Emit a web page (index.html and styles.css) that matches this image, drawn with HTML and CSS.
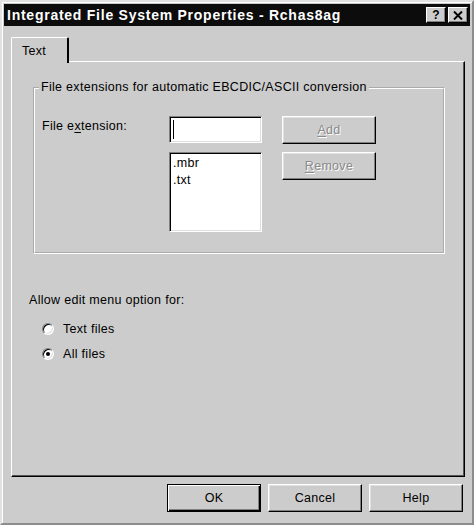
FILE: index.html
```html
<!DOCTYPE html>
<html lang="en">
  <head>
    <meta charset="UTF-8" />
    <meta name="viewport" content="width=device-width, initial-scale=1.0" />
    <title>Integrated File System Properties</title>
    <link rel="stylesheet" href="styles.css">
  </head>
  <body>
    <div class="window">
      <div class="titleBar">
        <span class="title">Integrated File System Properties - Rchas8ag</span>
        <div class="captionBtns">
          <button class="capBtn help">?</button>
          <button class="capBtn">
            <svg width="10" height="9" viewBox="0 0 10 9">
              <path d="M1 0.5 L9 8.5 M9 0.5 L1 8.5" stroke="#000" stroke-width="2" />
            </svg>
          </button>
        </div>
      </div>

      <div class="tabRow">
        <div class="tab">Text</div>
      </div>

      <div class="panel">
        <fieldset class="group">
          <legend>File extensions for automatic EBCDIC/ASCII conversion</legend>
          <div class="extGrid">
            <label class="extLabel">File e<u>x</u>tension:</label>
            <div class="input"><span class="caret"></span></div>
            <button class="btn" disabled><u>A</u>dd</button>
            <div class="listBox">
              <div>.mbr</div>
              <div>.txt</div>
            </div>
            <button class="btn removeBtn" disabled><u>R</u>emove</button>
          </div>
        </fieldset>

        <div class="options">
          <p>Allow edit menu option for:</p>
          <label class="radio"><span class="dot"></span>Text files</label>
          <label class="radio"><span class="dot checked"></span>All files</label>
        </div>
      </div>

      <div class="footer">
        <button class="btn default">OK</button>
        <button class="btn">Cancel</button>
        <button class="btn">Help</button>
      </div>
    </div>
  </body>
</html>
```

FILE: styles.css
```css
* {
  margin: 0;
  padding: 0;
  box-sizing: border-box;
}
body {
  width: 474px;
  height: 525px;
  overflow: hidden;
  background-color: #cccccc;
  font-family: "Liberation Sans", Arial, sans-serif;
  font-size: 12.5px;
  letter-spacing: 0.3px;
  color: #000;
}
u {
  text-decoration-thickness: 1px;
  text-underline-offset: 2px;
}

/* window frame */
.window {
  display: flex;
  flex-direction: column;
  width: 474px;
  height: 525px;
  padding: 2px;
  border: 2px solid;
  border-color: #e2e2e2 #8c8c8c #8c8c8c #e2e2e2;
  box-shadow: inset 1px 1px #fff;
  background-color: #cccccc;
}
.titleBar {
  display: flex;
  align-items: center;
  justify-content: space-between;
  height: 22px;
  padding: 0 2px 0 3px;
  background-color: #0c0c0c;
}
.title {
  color: #fff;
  font-weight: bold;
  font-size: 14px;
  letter-spacing: 0.75px;
  line-height: 22px;
  white-space: nowrap;
}
.captionBtns {
  display: flex;
  gap: 2px;
}
.capBtn {
  display: flex;
  align-items: center;
  justify-content: center;
  width: 20px;
  height: 16px;
  background-color: #cccccc;
  border: 1px solid;
  border-color: #fff #000 #000 #fff;
  box-shadow: inset -1px -1px #808080;
  font-family: "Liberation Sans", Arial, sans-serif;
  font-weight: bold;
  font-size: 12px;
  color: #000;
}

/* tab strip */
.tabRow {
  display: flex;
  margin-top: 11px;
  padding-left: 7px;
  height: 24px;
}
.tab {
  position: relative;
  z-index: 1;
  width: 58px;
  height: 26px;
  padding: 6px 0 0 10px;
  background-color: #cccccc;
  border-top: 1px solid #fff;
  border-left: 1px solid #fff;
  border-right: 2px solid #000;
  border-top-left-radius: 2px;
  border-top-right-radius: 2px;
  line-height: 15px;
}
.panel {
  display: flex;
  flex-direction: column;
  height: 416px;
  margin: 0 5px 0 7px;
  border: 1px solid;
  border-color: #fff #000 #000 #fff;
  box-shadow: inset -1px -1px #555;
}

/* group box */
.group {
  width: 412px;
  margin: 18px 0 0 21px;
  padding: 21px 10px 20px 7px;
  border: 2px groove #fff;
}
.group legend {
  margin-left: -3px;
  padding: 0 2px;
  line-height: 15px;
}
.extGrid {
  display: grid;
  grid-template-columns: 107px 93px 94px;
  grid-template-rows: 28px 80px;
  column-gap: 20px;
  row-gap: 8px;
}
.extLabel {
  padding-top: 3px;
}
.input,
.listBox {
  background-color: #fff;
  border: 1px solid;
  border-color: #808080 #fff #fff #808080;
  box-shadow: inset 1px 1px #000, inset -1px -1px #dfdfdf;
}
.input {
  height: 27px;
  padding: 3px 0 0 3px;
}
.caret {
  display: block;
  width: 1px;
  height: 19px;
  background-color: #000;
}
.listBox {
  grid-column: 2;
  grid-row: 2;
  padding: 2px 3px;
  line-height: 17px;
}
.removeBtn {
  grid-column: 3;
  grid-row: 2;
}

/* push buttons */
.btn {
  width: 94px;
  height: 28px;
  background-color: #cccccc;
  border: 1px solid;
  border-color: #fff #000 #000 #fff;
  box-shadow: inset -1px -1px #808080, inset 1px 1px #e0e0e0;
  font-family: inherit;
  font-size: 12.5px;
  letter-spacing: 0.3px;
  color: #000;
}
.btn:disabled {
  color: #8a8a8a;
  text-shadow: 1px 1px #fff;
}
.btn.default {
  border-color: #000;
  box-shadow: inset 1px 1px #fff, inset -1px -1px #000, inset -2px -2px #808080;
}

/* radio options */
.options {
  display: flex;
  flex-direction: column;
  gap: 9px;
  margin: 39px 0 0 17px;
}
.options p {
  line-height: 15px;
  margin-bottom: 4px;
}
.radio {
  display: flex;
  align-items: center;
  gap: 9px;
  height: 16px;
  padding-left: 13px;
}
.dot {
  position: relative;
  width: 12px;
  height: 12px;
  border-radius: 50%;
  background-color: #fff;
  border: 1px solid;
  border-color: #808080 #fff #fff #808080;
  box-shadow: inset 1px 1px #000, inset -1px -1px #dfdfdf;
}
.dot.checked::after {
  content: "";
  position: absolute;
  top: 3px;
  left: 3px;
  width: 4px;
  height: 4px;
  border-radius: 50%;
  background-color: #000;
}

.footer {
  display: flex;
  justify-content: flex-end;
  gap: 7px;
  margin-top: 7px;
  padding-right: 7px;
}
```
